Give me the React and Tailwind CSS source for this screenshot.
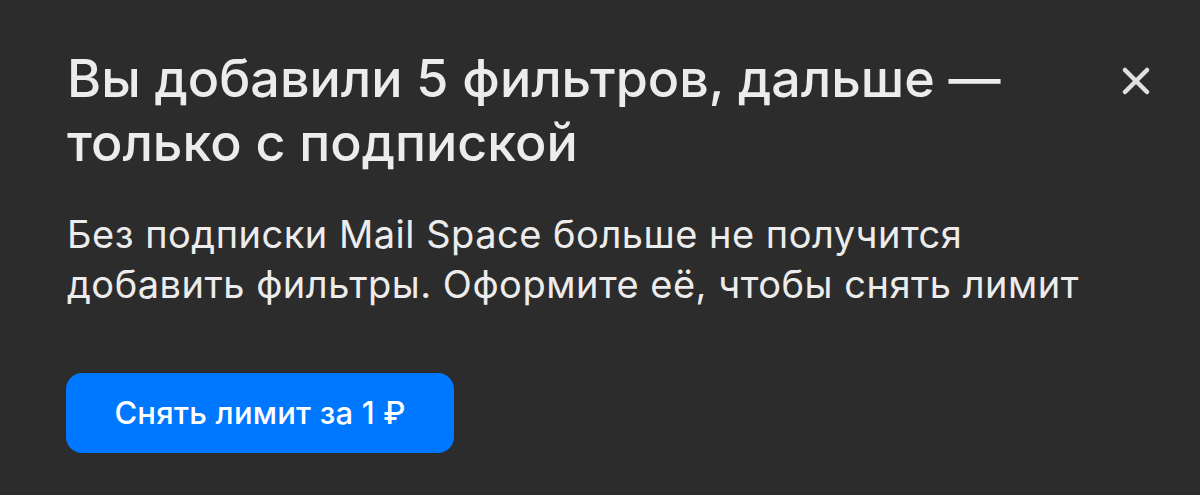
import { X } from 'lucide-react'

export default function App() {
  return (
    <div className="w-[1200px] h-[495px] bg-[#2c2c2c] text-[#ececec] font-['Inter',sans-serif] overflow-hidden">
      <div className="flex justify-between pl-[67px] pr-[42px] pt-[47px]">
        <h1 className="text-[52px] leading-[64px] font-medium tracking-[0px]">
          Вы добавили 5 фильтров, дальше —<br />
          только с подпиской
        </h1>
        <button className="mt-[12px] h-[44px] w-[44px] flex items-center justify-center text-[#e0e0e0]">
          <X size={46} strokeWidth={2.5} />
        </button>
      </div>
      <p className="pl-[67px] mt-[34px] text-[38px] leading-[50px] tracking-[0.5px]">
        Без подписки Mail Space больше не получится<br />
        добавить фильтры. Оформите её, чтобы снять лимит
      </p>
      <div className="pl-[66px] mt-[64px]">
        <button className="h-[80px] w-[388px] rounded-[16px] bg-[#0077ff] text-white text-[31px] font-medium tracking-[0.2px]">
          Снять лимит за 1 ₽
        </button>
      </div>
    </div>
  )
}
